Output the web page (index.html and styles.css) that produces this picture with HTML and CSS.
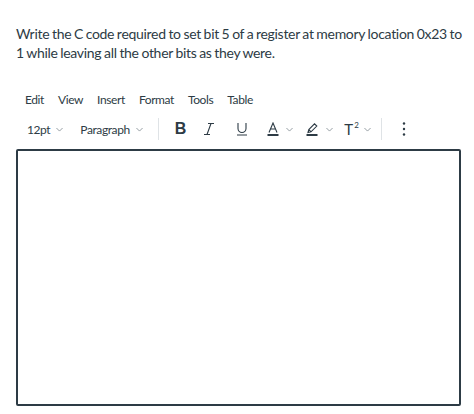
FILE: index.html
```html
<!DOCTYPE html>
<html>
<head>
<meta charset="utf-8">
<link rel="stylesheet" href="styles.css">
</head>
<body>
<div class="page">
  <p class="question">Write the C code required to set bit 5 of a register at memory location 0x23 to 1 while leaving all the other bits as they were.</p>
  <div class="editor">
    <div class="menubar">
      <span class="menu">Edit</span>
      <span class="menu">View</span>
      <span class="menu">Insert</span>
      <span class="menu">Format</span>
      <span class="menu">Tools</span>
      <span class="menu">Table</span>
    </div>
    <div class="toolbar">
      <span class="select size">12pt<svg class="chev" viewBox="0 0 8 5"><path d="M0.5 0.8l3.5 3.5 3.5-3.5"/></svg></span>
      <span class="select para">Paragraph<svg class="chev" viewBox="0 0 8 5"><path d="M0.5 0.8l3.5 3.5 3.5-3.5"/></svg></span>
      <span class="sep sep-a"></span>
      <span class="btn bold">B</span>
      <span class="btn italic">
        <svg class="ico" viewBox="0 0 14 14"><path d="M6 1.5h6M2 12.5h6M9 1.5L5 12.5"/></svg>
      </span>
      <span class="btn underline">
        <svg class="ico" viewBox="0 0 14 14"><path d="M3 1v5.5a4 4 0 0 0 8 0V1M2 13h10"/></svg>
      </span>
      <span class="btn color">
        <svg class="ico" viewBox="0 0 14 14"><path d="M3 10.5L7 1l4 9.5M4.5 7h5"/><rect class="fill" x="1.5" y="12" width="11" height="2"/></svg>
        <svg class="chev" viewBox="0 0 8 5"><path d="M0.5 0.8l3.5 3.5 3.5-3.5"/></svg>
      </span>
      <span class="btn highlight">
        <svg class="ico" viewBox="0 0 14 14"><path d="M3 10.5l0.8-3L9.5 1.8l2.3 2.3L6 9.8zM3.8 7.5l2.2 2.3"/><rect class="fill" x="1.5" y="12" width="11" height="2"/></svg>
        <svg class="chev" viewBox="0 0 8 5"><path d="M0.5 0.8l3.5 3.5 3.5-3.5"/></svg>
      </span>
      <span class="btn sup">T<span class="two">2</span><svg class="chev" viewBox="0 0 8 5"><path d="M0.5 0.8l3.5 3.5 3.5-3.5"/></svg></span>
      <span class="sep sep-b"></span>
      <span class="btn more">
        <svg viewBox="0 0 4 16" class="dots"><circle cx="2" cy="2.5" r="1.2"/><circle cx="2" cy="8" r="1.2"/><circle cx="2" cy="13.5" r="1.2"/></svg>
      </span>
    </div>
    <div class="area"></div>
  </div>
</div>
</body>
</html>
```

FILE: styles.css
```css
html, body {
  margin: 0;
  padding: 0;
  background: #ffffff;
}
.page {
  padding: 24px 11px 0 16px;
  font-family: Lato, "Liberation Sans", sans-serif;
  color: #2d3b45;
}
.question {
  margin: 0;
  font-size: 14px;
  line-height: 19px;
  letter-spacing: -0.3px;
  word-spacing: -0.6px;
}
.editor {
  margin-top: 29px;
}
.menubar {
  display: flex;
  padding-left: 9px;
  font-size: 12px;
  letter-spacing: -0.4px;
  line-height: 18px;
  height: 18px;
}
.menu {
  margin-right: 14px;
}
.toolbar {
  display: flex;
  align-items: center;
  height: 24px;
  margin-top: 8px;
  padding-left: 11px;
  font-size: 12px;
  letter-spacing: -0.4px;
}
.select {
  display: inline-flex;
  align-items: center;
}
.para { margin-left: 17px; }
.chev {
  width: 7px;
  height: 5px;
  margin-left: 6px;
  fill: none;
  stroke: #7b868e;
  stroke-width: 0.9;
}
.sep {
  width: 1px;
  height: 22px;
  background: #dfe3e6;
}
.sep-a { margin-left: 15px; }
.btn {
  display: inline-flex;
  align-items: center;
}
.bold {
  font-family: "Liberation Sans", Arial, sans-serif;
  font-weight: bold;
  font-size: 16px;
  letter-spacing: 0;
  margin-left: 16px;
}
.ico {
  width: 14px;
  height: 14px;
  fill: none;
  stroke: #2d3b45;
  stroke-width: 1.1;
}
.ico .fill { fill: #2d3b45; stroke: none; }
.italic { margin-left: 16px; }
.underline { margin-left: 19px; }
.color { margin-left: 17px; }
.highlight { margin-left: 12px; }
.highlight .chev { margin-left: 7px; }
.sup {
  margin-left: 11px;
  font-size: 15px;
  letter-spacing: 0;
  line-height: 1;
}
.sup .two {
  font-size: 8px;
  align-self: flex-start;
  margin-top: -1px;
  margin-left: 1px;
}
.sup .chev { margin-left: 5px; }
.sep-b { margin-left: 10px; }
.more { margin-left: 20px; }
.dots {
  width: 4px;
  height: 16px;
  fill: #2d3b45;
}
.area {
  margin-top: 8px;
  height: 253px;
  width: 441px;
  border: 2px solid #2d3b45;
  border-radius: 2px;
}
```
